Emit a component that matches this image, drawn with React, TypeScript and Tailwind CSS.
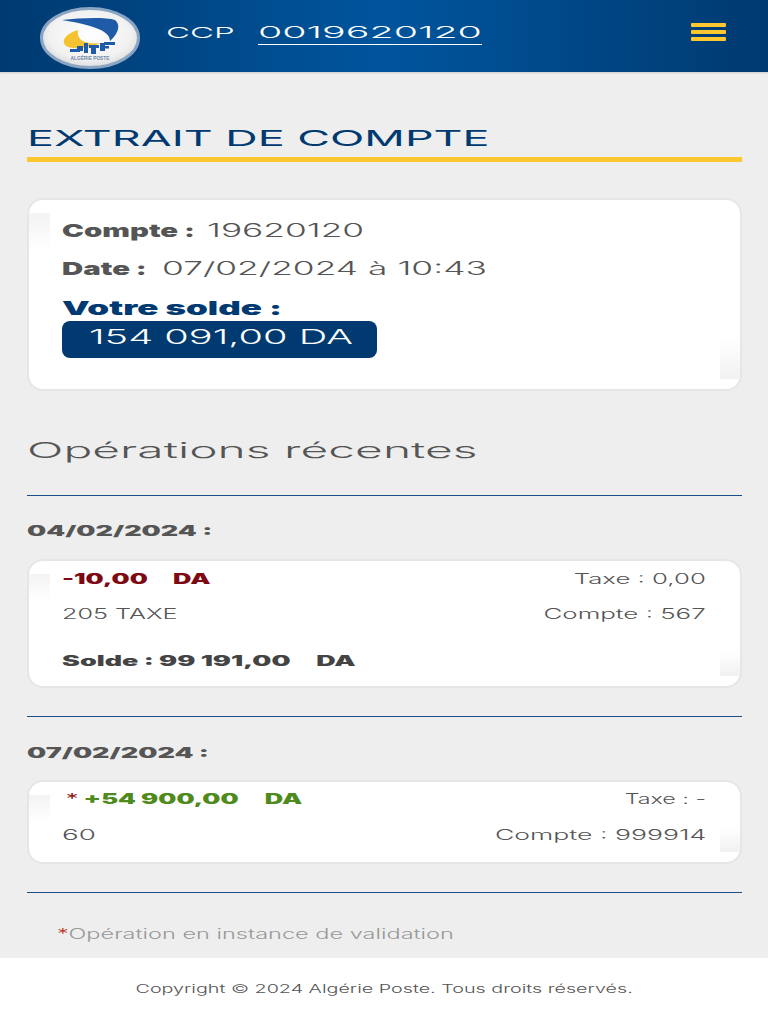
import React from 'react';

const wide = 'inline-block origin-left whitespace-nowrap';
const wideRight = 'inline-block origin-right whitespace-nowrap';

// pale patches that sit on the card corners in the capture
const Patches: React.FC<{ tall?: boolean }> = ({ tall }) => (
  <>
    <div className={`absolute left-0 top-[13px] w-[21px] bg-gradient-to-b from-[#f3f3f3] to-white ${tall ? 'h-[38px]' : 'h-[26px]'}`} />
    <div className={`absolute right-0 bottom-[10px] w-[20px] bg-gradient-to-b from-white to-[#f1f1f1] ${tall ? 'h-[40px]' : 'h-[24px]'}`} />
  </>
);

const Logo = () => (
  <svg viewBox="0 0 100 62" className="w-[100px] h-[62px] mt-[3px] shrink-0">
    <defs>
      <radialGradient id="disc" cx="50%" cy="45%" r="60%">
        <stop offset="0%" stopColor="#ffffff" />
        <stop offset="70%" stopColor="#f1f1f1" />
        <stop offset="100%" stopColor="#d4d4d4" />
      </radialGradient>
    </defs>
    <ellipse cx="50" cy="31" rx="48.5" ry="29.5" fill="url(#disc)" stroke="#8aa5c4" strokeWidth="3" />
    <path d="M22 13 C40 11 65 10 75 13 C80 17 80 25 70 34 C70 26 60 19 22 13 Z" fill="#1f5ba6" />
    <path d="M38 23 C27 26 21 33 25 38 C30 43 50 42 60 36 C50 37 36 36 38 23 Z" fill="#f5c332" />
    <g fill="#1f5ba6">
      <rect x="30" y="42" width="10" height="3" />
      <rect x="37" y="39" width="6" height="5" />
      <rect x="44" y="36" width="4" height="10" />
      <rect x="49" y="38" width="10" height="3" />
      <rect x="51" y="41" width="5" height="6" />
      <rect x="60" y="36" width="5" height="8" />
      <rect x="64" y="35" width="11" height="3" />
      <rect x="62" y="39" width="7" height="2.5" />
    </g>
    <text x="50" y="53" textAnchor="middle" fontSize="4.8" fontWeight="700" fill="#6d87a6" fontFamily="Liberation Sans, sans-serif">ALGÉRIE POSTE</text>
  </svg>
);

const Rule = () => <div className="h-px bg-[#17508a]" />;

export default function App() {
  return (
    <div className="w-[768px] h-[1024px] flex flex-col bg-[#eeeeee] font-['Inter',sans-serif] overflow-hidden">
      <header className="h-[72px] shrink-0 flex items-center pl-[40px] pr-[42px] bg-gradient-to-r from-[#003a70] via-[#00559e] to-[#003a70] shadow-[0_1px_2px_rgba(0,0,0,0.15)]">
        <Logo />
        <span className={`${wide} ml-[26px] mb-[6px] w-[92px] text-[15px] font-light text-white scale-x-[2.2]`}>CCP</span>
        <span className="w-[224px] h-[26px] mb-[9px] border-b border-white text-white">
          <span className={`${wide} text-[16px] leading-[26px] font-light scale-x-[2.46]`}>0019620120</span>
        </span>
        <button className="ml-auto mb-[8px] flex flex-col gap-[3px]">
          <span className="block w-[35px] h-[4px] bg-[#fdc82f] rounded-[1px]" />
          <span className="block w-[35px] h-[4px] bg-[#fdc82f] rounded-[1px]" />
          <span className="block w-[35px] h-[4px] bg-[#fdc82f] rounded-[1px]" />
        </button>
      </header>

      <main className="flex-1 pl-[27px] pr-[26px] pt-[53px] flex flex-col">
        <h1 className="h-[32px] leading-[26px] text-[#003a70]">
          <span className={`${wide} text-[22px] font-normal scale-x-[2.04]`}>EXTRAIT DE COMPTE</span>
        </h1>
        <div className="h-[5px] bg-[#fdc82f]" />

        <section className="relative mt-[36px] h-[193px] rounded-[16px] bg-white border-2 border-[#e6e6e6] pl-[33px] pt-[19px] overflow-hidden">
          <Patches tall />
          <div className="relative flex h-[24px] text-[#555555] text-[18px] leading-[24px] font-light">
            <span className="w-[145px] shrink-0"><b className={`${wide} font-black scale-x-[1.63]`}>Compte :</b></span>
            <span className={`${wide} scale-x-[1.96]`}>19620120</span>
          </div>
          <div className="relative flex mt-[14px] h-[24px] text-[#555555] text-[18px] leading-[24px] font-light">
            <span className="w-[100px] shrink-0"><b className={`${wide} font-black scale-x-[1.63]`}>Date :</b></span>
            <span className={`${wide} scale-x-[1.965]`}>07/02/2024 à 10:43</span>
          </div>
          <div className="relative mt-[16px] h-[24px] text-[#003a70] text-[19px] leading-[24px] font-black">
            <span className={`${wide} scale-x-[1.84]`}>Votre solde :</span>
          </div>
          <div className="relative w-[315px] h-[37px] rounded-[8px] bg-[#003a70] text-white pl-[27px] text-[20px] leading-[32px] font-light">
            <span className={`${wide} scale-x-[1.985]`}>154 091,00 DA</span>
          </div>
        </section>

        <h2 className="mt-[43px] h-[32px] text-[#555555] text-[22px] leading-[32px] font-light">
          <span className={`${wide} scale-x-[2.18]`}>Opérations récentes</span>
        </h2>
        <div className="mt-[29px]"><Rule /></div>

        <div className="mt-[25px] h-[20px] text-[#555555] text-[14px] leading-[20px] font-black">
          <span className={`${wide} scale-x-[1.93]`}>04/02/2024 :</span>
        </div>

        <section className="relative mt-[18px] h-[129px] rounded-[16px] bg-white border-2 border-[#e6e6e6] pl-[33px] pr-[34px] pt-[8px] overflow-hidden">
          <Patches />
          <div className="relative flex justify-between h-[20px] leading-[20px] text-[14px]">
            <span className={`${wide} font-black text-[#7d0a12] scale-x-[1.82]`}>-10,00&nbsp;&nbsp; <span className="ml-[5.5px]">DA</span></span>
            <span className={`${wideRight} font-light text-[#555555] scale-x-[1.84]`}>Taxe : 0,00</span>
          </div>
          <div className="relative flex justify-between mt-[15px] h-[20px] leading-[20px] text-[14px] font-light text-[#555555]">
            <span className={`${wide} scale-x-[1.8]`}>205 TAXE</span>
            <span className={`${wideRight} scale-x-[1.85]`}>Compte : 567</span>
          </div>
          <div className="relative mt-[27px] h-[20px] leading-[20px] text-[14px] font-black text-[#444444]">
            <span className={`${wide} scale-x-[1.92]`}>Solde : 99 191,00&nbsp;&nbsp; <span className="ml-[5px]">DA</span></span>
          </div>
        </section>

        <div className="mt-[28px]"><Rule /></div>

        <div className="mt-[26px] h-[20px] text-[#555555] text-[14px] leading-[20px] font-black">
          <span className={`${wide} scale-x-[1.93]`}>07/02/2024 :</span>
        </div>

        <section className="relative mt-[17px] h-[84px] rounded-[16px] bg-white border-2 border-[#e6e6e6] pl-[33px] pr-[34px] pt-[7px] overflow-hidden">
          <Patches />
          <div className="relative flex justify-between h-[20px] leading-[20px] text-[14px]">
            <span className={`${wide} pl-[2px] font-black text-[#4f8a1c] scale-x-[1.82]`}><span className="text-[#8b1a1a] font-normal">*</span> +54 900,00&nbsp;&nbsp; <span className="ml-[6px]">DA</span></span>
            <span className={`${wideRight} font-light text-[#555555] scale-x-[1.66]`}>Taxe : -</span>
          </div>
          <div className="relative flex justify-between mt-[16px] h-[20px] leading-[20px] text-[14px] font-light text-[#555555]">
            <span className={`${wide} scale-x-[1.98]`}>60</span>
            <span className={`${wideRight} scale-x-[1.9]`}>Compte : 999914</span>
          </div>
        </section>

        <div className="mt-[28px]"><Rule /></div>

        <div className="mt-[31px] ml-[30px] h-[20px] leading-[20px] text-[14px] font-light text-[#999999]">
          <span className={`${wide} scale-x-[1.68]`}><span className="text-[#c0392b]">*</span>Opération en instance de validation</span>
        </div>
      </main>

      <footer className="h-[66px] shrink-0 bg-white flex items-center justify-center text-[#555555] text-[12px] font-light">
        <span className="inline-block mb-[4px] whitespace-nowrap scale-x-[1.645]">Copyright © 2024 Algérie Poste. Tous droits réservés.</span>
      </footer>
    </div>
  );
}
